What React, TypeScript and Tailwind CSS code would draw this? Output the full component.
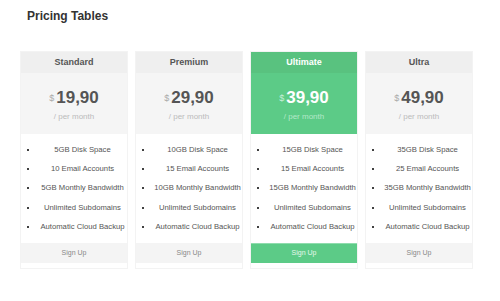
import React from "react"

type Plan = {
  name: string
  price: string
  features: string[]
  featured?: boolean
}

const plans: Plan[] = [
  {
    name: "Standard",
    price: "19,90",
    features: ["5GB Disk Space", "10 Email Accounts", "5GB Monthly Bandwidth", "Unlimited Subdomains", "Automatic Cloud Backup"],
  },
  {
    name: "Premium",
    price: "29,90",
    features: ["10GB Disk Space", "15 Email Accounts", "10GB Monthly Bandwidth", "Unlimited Subdomains", "Automatic Cloud Backup"],
  },
  {
    name: "Ultimate",
    price: "39,90",
    featured: true,
    features: ["15GB Disk Space", "15 Email Accounts", "15GB Monthly Bandwidth", "Unlimited Subdomains", "Automatic Cloud Backup"],
  },
  {
    name: "Ultra",
    price: "49,90",
    features: ["35GB Disk Space", "25 Email Accounts", "35GB Monthly Bandwidth", "Unlimited Subdomains", "Automatic Cloud Backup"],
  },
]

function PricingCard({ plan }: { plan: Plan }) {
  const on = plan.featured
  return (
    <div className="flex-1 basis-0 min-w-0 border border-[#f3f3f3] bg-white">
      <div
        className={`h-[21px] flex items-center justify-center text-[9px] font-bold ${
          on ? "bg-[#59c27f] text-white" : "bg-[#efefef] text-[#555]"
        }`}
      >
        {plan.name}
      </div>
      <div className={`h-[61px] pt-[15px] flex flex-col items-center ${on ? "bg-[#5ccb87]" : "bg-[#f5f5f5]"}`}>
        <div className="flex items-center leading-[20px]">
          <span className={`text-[9px] mr-[2px] -mt-[1px] ${on ? "text-[#c8efd6]" : "text-[#aaa]"}`}>$</span>
          <span className={`text-[17px] font-bold ${on ? "text-white" : "text-[#555]"}`}>{plan.price}</span>
        </div>
        <div className={`mt-[3px] text-[8px] leading-[12px] ${on ? "text-[#b4e8c7]" : "text-[#bbb]"}`}>/ per month</div>
      </div>
      <ul className="list-disc pl-[17px] pt-[6px] pb-[7px] text-[7.7px] leading-[19.2px] text-[#555] marker:text-black">
        {plan.features.map((f) => (
          <li key={f} className="text-center whitespace-nowrap">
            {f}
          </li>
        ))}
      </ul>
      <button
        className={`block w-full h-[20px] mb-[5px] text-[7px] ${
          on ? "bg-[#5ccb87] text-[#e6f8ec] border-t border-[#8fdcad]" : "bg-[#f4f4f4] text-[#888]"
        }`}
      >
        Sign Up
      </button>
    </div>
  )
}

export default function App() {
  return (
    <div className="w-[500px] h-[301px] bg-white font-['Liberation_Sans',Arial,sans-serif]">
      <h1 className="pt-[6px] pl-[27px] text-[12px] leading-[20px] font-bold text-[#333]">Pricing Tables</h1>
      <div className="flex gap-[7px] pl-[20px] pr-[27px] mt-[25px]">
        {plans.map((p) => (
          <PricingCard key={p.name} plan={p} />
        ))}
      </div>
    </div>
  )
}
